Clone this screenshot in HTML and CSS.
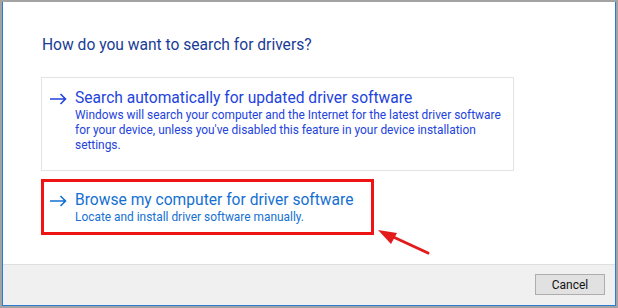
FILE: index.html
```html
<!DOCTYPE html>
<html lang="en">
<head>
  <meta charset="UTF-8">
  <title>Update Drivers</title>
  <link rel="stylesheet" href="styles.css">
</head>
<body>

  <!-- dialog window -->
  <div class="window">
    <div class="content">
      <h1 class="instruction">How do you want to search for drivers?</h1>

      <div class="option auto">
        <svg class="arrow" width="18" height="12" viewBox="0 0 18 12">
          <path d="M1 6H16.5M11.5 1L16.5 6L11.5 11" fill="none" stroke="currentColor" stroke-width="1.6"/>
        </svg>
        <div class="option-text">
          <div class="option-title">Search automatically for updated driver software</div>
          <div class="option-desc">Windows will search your computer and the Internet for the latest driver software for your device, unless you've disabled this feature in your device installation settings.</div>
        </div>
      </div>

      <div class="option browse">
        <svg class="arrow" width="18" height="12" viewBox="0 0 18 12">
          <path d="M1 6H16.5M11.5 1L16.5 6L11.5 11" fill="none" stroke="currentColor" stroke-width="1.6"/>
        </svg>
        <div class="option-text">
          <div class="option-title">Browse my computer for driver software</div>
          <div class="option-desc">Locate and install driver software manually.</div>
        </div>
      </div>

      <!-- red pointer annotation -->
      <svg class="pointer" width="62" height="36" viewBox="0 0 62 36">
        <path d="M57 31L18 13" stroke="#e41b1b" stroke-width="3" stroke-linecap="round"/>
        <path d="M7 8L26 11L20 22Z" fill="#e41b1b"/>
      </svg>
    </div>

    <div class="footer">
      <button class="cancel-btn">Cancel</button>
    </div>
  </div>

</body>
</html>
```

FILE: styles.css
```css
* {
  box-sizing: border-box;
}

body {
  margin: 0;
  background: #a3a3a3;
  font-family: Roboto, 'Open Sans', sans-serif;
}

.window {
  margin: 2px 2px 0 2px;
  height: 304px;
  border: 1px solid #2b7bd3;
  border-top: none;
  background: white;
  display: flex;
  flex-direction: column;
}

.content {
  position: relative;
  height: 262px;
  padding: 32px 0 0 38px;
}

.instruction {
  margin: 0 0 21px 1px;
  font-size: 15.6px;
  line-height: 22px;
  font-weight: normal;
  color: #1a3c96;
}

.option {
  width: 473px;
  display: flex;
  align-items: flex-start;
}

.option.auto {
  border: 1px solid #e3e3e3;
  padding: 10px 2px 17px 7px;
  color: #2343dc;
}

.option.browse {
  width: 333px;
  margin-top: 8px;
  border: 3px solid #ee1414;
  padding: 8px 4px 7px 5px;
  color: #1570d2;
}

.arrow {
  flex: none;
  margin: 5px 8px 0 0;
}

.option-title {
  font-size: 15.6px;
  line-height: 20px;
}

.option-desc {
  font-size: 11.9px;
  line-height: 15px;
}

.pointer {
  position: absolute;
  left: 368px;
  top: 220px;
}

.footer {
  flex: 1;
  border-top: 1px solid #dfdfdf;
  background: #f0f0f0;
  display: flex;
  justify-content: flex-end;
  align-items: flex-start;
  padding: 9px 10px 0 0;
}

.cancel-btn {
  width: 70px;
  height: 21px;
  border: 1px solid #adadad;
  background: #e1e1e1;
  font-family: Roboto, 'Open Sans', sans-serif;
  font-size: 12px;
  color: #111;
  padding: 0;
}
```
